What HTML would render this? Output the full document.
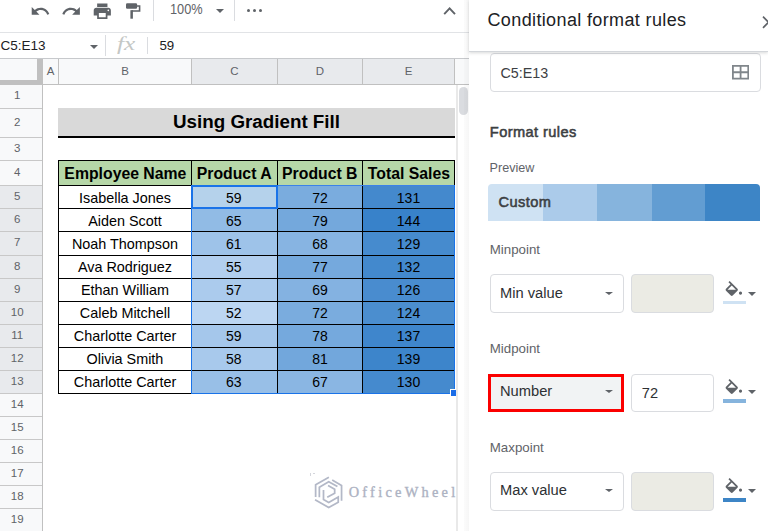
<!DOCTYPE html>
<html><head><meta charset="utf-8"><title>Conditional format rules</title>
<style>
html,body{margin:0;padding:0;}
body{width:768px;height:531px;overflow:hidden;background:#fff;position:relative;font-family:"Liberation Sans",sans-serif;color:#000;}
.a{position:absolute;}
.t{position:absolute;white-space:nowrap;line-height:1;}
.rh{position:absolute;left:0;width:42px;background:#f8f9fa;border-bottom:1px solid #c8c8c8;font-size:11.5px;color:#5f6368;text-align:center;box-sizing:content-box;}
.rh span{position:absolute;left:0;width:34.4px;text-align:center;line-height:1;}
.rh.sel{background:#e8eaed;}
.ch{position:absolute;top:59px;height:25px;background:#f8f9fa;border-right:1px solid #c0c0c0;font-size:11.5px;color:#5f6368;text-align:center;line-height:25px;}
.ch.sel{background:#e8eaed;}
.cell{position:absolute;font-size:14.2px;text-align:center;white-space:nowrap;overflow:hidden;color:#000;}
.hl{position:absolute;height:1px;background:#000;}
.vl{position:absolute;width:1px;background:#000;}
.lbl{position:absolute;left:489px;font-size:12px;color:#5f6368;line-height:1;white-space:nowrap;}
.sel{ }
.box{position:absolute;box-sizing:border-box;border:1px solid #dadce0;border-radius:4px;background:#fff;}
.box .tx{position:absolute;left:10px;font-size:14px;color:#202124;line-height:1;white-space:nowrap;}
.arr{position:absolute;width:0;height:0;border-left:4.5px solid transparent;border-right:4.5px solid transparent;border-top:4.5px solid #5f6368;}
</style></head><body>

<div class="a" style="left:0;top:0;width:469px;height:32px;background:#fff;border-bottom:1px solid #e1e3e6;"></div>
<svg class="a" style="left:30.1px;top:0.5px;" width="20.6" height="20.6" viewBox="0 0 24 24"><path fill="#5f6368" d="M12.5 8c-2.65 0-5.05.99-6.9 2.6L2 7v9h9l-3.62-3.62c1.39-1.16 3.16-1.88 5.12-1.88 3.54 0 6.55 2.31 7.6 5.5l2.37-.78C21.08 11.03 17.15 8 12.5 8z"/></svg>
<svg class="a" style="left:61.4px;top:0.5px;" width="20.6" height="20.6" viewBox="0 0 24 24"><path fill="#5f6368" d="M18.4 10.6C16.55 8.99 14.15 8 11.5 8c-4.65 0-8.58 3.03-9.96 7.22L3.9 16c1.05-3.19 4.05-5.5 7.6-5.5 1.95 0 3.73.72 5.12 1.88L13 16h9V7l-3.6 3.6z"/></svg>
<svg class="a" style="left:91.6px;top:0.5px;" width="20.6" height="20.6" viewBox="0 0 24 24"><path fill="#5f6368" d="M19 8H5c-1.66 0-3 1.34-3 3v6h4v4h12v-4h4v-6c0-1.66-1.34-3-3-3zm-3 11H8v-5h8v5zm3-7c-.55 0-1-.45-1-1s.45-1 1-1 1 .45 1 1-.45 1-1 1zm-1-9H6v4h12V3z"/></svg>
<svg class="a" style="left:120px;top:0;" width="30" height="24" viewBox="120 0 30 24"><rect x="126" y="3.2" width="11.1" height="5.5" rx="1.2" fill="#5f6368"/><path d="M137 6 H139.6 V11 H131.6" fill="none" stroke="#5f6368" stroke-width="1.6"/><rect x="130.4" y="10.2" width="2.5" height="8.5" fill="#5f6368"/></svg>
<div class="a" style="left:153px;top:0;width:1px;height:21px;background:#dadce0;"></div>
<div class="t" style="left:170.4px;top:2.18px;font-size:14.2px;color:#5f6368;transform:scaleX(0.9);transform-origin:0 0;">100%</div>
<div class="arr" style="left:216px;top:8.6px;"></div>
<div class="a" style="left:234px;top:0;width:1px;height:21px;background:#dadce0;"></div>
<div class="a" style="left:246.6px;top:9.3px;width:3px;height:3px;border-radius:50%;background:#5f6368;"></div>
<div class="a" style="left:252.6px;top:9.3px;width:3px;height:3px;border-radius:50%;background:#5f6368;"></div>
<div class="a" style="left:258.6px;top:9.3px;width:3px;height:3px;border-radius:50%;background:#5f6368;"></div>
<svg class="a" style="left:442px;top:5px;" width="16" height="12" viewBox="0 0 16 12"><path d="M2.2 9.2 L7.6 3.4 L13 9.2" fill="none" stroke="#5f6368" stroke-width="1.9"/></svg>
<div class="a" style="left:0;top:33px;width:469px;height:25px;background:#fff;border-bottom:1px solid #c7c9cc;"></div>
<div class="t" style="left:0.5px;top:38.87px;font-size:13.5px;color:#202124;">C5:E13</div>
<div class="arr" style="left:90px;top:45px;border-top-color:#5f6368;"></div>
<div class="a" style="left:105px;top:35px;width:1px;height:21px;background:#dadce0;"></div>
<div class="t" style="left:117px;top:35px;font-family:'Liberation Serif',serif;font-style:italic;font-size:18px;color:#c4c7c5;transform:scaleX(1.4);transform-origin:0 0;">fx</div>
<div class="a" style="left:147px;top:37px;width:1px;height:17px;background:#dadce0;"></div>
<div class="t" style="left:159.4px;top:39.04px;font-size:13.3px;color:#202124;">59</div>
<div class="a" style="left:0;top:59px;width:469px;height:25px;background:#f8f9fa;border-bottom:1px solid #c0c0c0;"></div>
<div class="ch" style="left:43px;width:15px;">A</div>
<div class="ch" style="left:59px;width:132px;">B</div>
<div class="ch sel" style="left:192px;width:85px;">C</div>
<div class="ch sel" style="left:278px;width:84px;">D</div>
<div class="ch sel" style="left:363px;width:91px;">E</div>
<div class="a" style="left:0;top:59px;width:37px;height:21px;background:#f8f9fa;"></div>
<div class="a" style="left:37px;top:59px;width:6px;height:26px;background:#c0c0c0;"></div>
<div class="a" style="left:0;top:80px;width:43px;height:5px;background:#c0c0c0;"></div>
<div class="rh" style="top:85px;height:23px;"><span style="top:5.25px;">1</span></div>
<div class="rh" style="top:109px;height:28px;"><span style="top:7.75px;">2</span></div>
<div class="rh" style="top:138px;height:22px;"><span style="top:4.75px;">3</span></div>
<div class="rh" style="top:161px;height:24px;"><span style="top:5.75px;">4</span></div>
<div class="rh sel" style="top:186px;height:22px;"><span style="top:4.75px;">5</span></div>
<div class="rh sel" style="top:209px;height:22px;"><span style="top:4.75px;">6</span></div>
<div class="rh sel" style="top:232px;height:23px;"><span style="top:5.25px;">7</span></div>
<div class="rh sel" style="top:256px;height:22px;"><span style="top:4.75px;">8</span></div>
<div class="rh sel" style="top:279px;height:22px;"><span style="top:4.75px;">9</span></div>
<div class="rh sel" style="top:302px;height:22px;"><span style="top:4.75px;">10</span></div>
<div class="rh sel" style="top:325px;height:22px;"><span style="top:4.75px;">11</span></div>
<div class="rh sel" style="top:348px;height:22px;"><span style="top:4.75px;">12</span></div>
<div class="rh sel" style="top:371px;height:22px;"><span style="top:4.75px;">13</span></div>
<div class="rh" style="top:394px;height:22px;"><span style="top:4.75px;">14</span></div>
<div class="rh" style="top:417px;height:22px;"><span style="top:4.75px;">15</span></div>
<div class="rh" style="top:440px;height:22px;"><span style="top:4.75px;">16</span></div>
<div class="rh" style="top:463px;height:22px;"><span style="top:4.75px;">17</span></div>
<div class="rh" style="top:486px;height:22px;"><span style="top:4.75px;">18</span></div>
<div class="rh" style="top:509px;height:22px;"><span style="top:4.75px;">19</span></div>
<div class="a" style="left:42px;top:85px;width:1px;height:446px;background:#c0c0c0;"></div>
<div class="a" style="left:58px;top:108px;width:397px;height:28px;background:#d9d9d9;"></div>
<div class="a" style="left:58px;top:136px;width:397px;height:2px;background:#000;"></div>
<div class="t" style="left:58px;top:113.39px;font-size:18.8px;width:397px;text-align:center;font-weight:bold;">Using Gradient Fill</div>
<div class="a" style="left:59px;top:161px;width:396px;height:24px;background:#b6d7a8;"></div>
<div class="t" style="left:49.4px;top:165.73px;font-size:15.8px;width:152px;text-align:center;font-weight:bold;">Employee Name</div>
<div class="t" style="left:181.7px;top:165.73px;font-size:15.8px;width:105px;text-align:center;font-weight:bold;">Product A</div>
<div class="t" style="left:267.8px;top:165.73px;font-size:15.8px;width:104px;text-align:center;font-weight:bold;">Product B</div>
<div class="t" style="left:353.4px;top:165.73px;font-size:15.8px;width:111px;text-align:center;font-weight:bold;">Total Sales</div>
<div class="a" style="left:59px;top:186px;width:132px;height:22px;background:#fff;"></div>
<div class="t" style="left:59px;top:190.66px;font-size:14.4px;width:132px;text-align:center;transform:scaleY(1.04);transform-origin:50% 84.65%;">Isabella Jones</div>
<div class="a" style="left:192px;top:186px;width:85px;height:22px;background:#b5d2eb;"></div>
<div class="t" style="left:191.3px;top:191.00px;font-size:14.0px;width:85px;text-align:center;transform:scaleY(1.09);transform-origin:50% 84.65%;">59</div>
<div class="a" style="left:278px;top:186px;width:84px;height:22px;background:#7aacde;"></div>
<div class="t" style="left:278px;top:191.00px;font-size:14.0px;width:84px;text-align:center;transform:scaleY(1.09);transform-origin:50% 84.65%;">72</div>
<div class="a" style="left:363px;top:186px;width:91px;height:22px;background:#4489cd;"></div>
<div class="t" style="left:363px;top:191.00px;font-size:14.0px;width:91px;text-align:center;transform:scaleY(1.09);transform-origin:50% 84.65%;">131</div>
<div class="a" style="left:59px;top:209px;width:132px;height:22px;background:#fff;"></div>
<div class="t" style="left:59px;top:213.67px;font-size:14.4px;width:132px;text-align:center;transform:scaleY(1.04);transform-origin:50% 84.65%;">Aiden Scott</div>
<div class="a" style="left:192px;top:209px;width:85px;height:22px;background:#91bbe5;"></div>
<div class="t" style="left:191.3px;top:214.01px;font-size:14.0px;width:85px;text-align:center;transform:scaleY(1.09);transform-origin:50% 84.65%;">65</div>
<div class="a" style="left:278px;top:209px;width:84px;height:22px;background:#74a8dc;"></div>
<div class="t" style="left:278px;top:214.01px;font-size:14.0px;width:84px;text-align:center;transform:scaleY(1.09);transform-origin:50% 84.65%;">79</div>
<div class="a" style="left:363px;top:209px;width:91px;height:22px;background:#3882ca;"></div>
<div class="t" style="left:363px;top:214.01px;font-size:14.0px;width:91px;text-align:center;transform:scaleY(1.09);transform-origin:50% 84.65%;">144</div>
<div class="a" style="left:59px;top:232px;width:132px;height:23px;background:#fff;"></div>
<div class="t" style="left:59px;top:236.68px;font-size:14.4px;width:132px;text-align:center;transform:scaleY(1.04);transform-origin:50% 84.65%;">Noah Thompson</div>
<div class="a" style="left:192px;top:232px;width:85px;height:23px;background:#9ec3e9;"></div>
<div class="t" style="left:191.3px;top:237.02px;font-size:14.0px;width:85px;text-align:center;transform:scaleY(1.09);transform-origin:50% 84.65%;">61</div>
<div class="a" style="left:278px;top:232px;width:84px;height:23px;background:#87b4e2;"></div>
<div class="t" style="left:278px;top:237.02px;font-size:14.0px;width:84px;text-align:center;transform:scaleY(1.09);transform-origin:50% 84.65%;">68</div>
<div class="a" style="left:363px;top:232px;width:91px;height:23px;background:#468bce;"></div>
<div class="t" style="left:363px;top:237.02px;font-size:14.0px;width:91px;text-align:center;transform:scaleY(1.09);transform-origin:50% 84.65%;">129</div>
<div class="a" style="left:59px;top:256px;width:132px;height:22px;background:#fff;"></div>
<div class="t" style="left:59px;top:259.69px;font-size:14.4px;width:132px;text-align:center;transform:scaleY(1.04);transform-origin:50% 84.65%;">Ava Rodriguez</div>
<div class="a" style="left:192px;top:256px;width:85px;height:22px;background:#b2cfef;"></div>
<div class="t" style="left:191.3px;top:260.03px;font-size:14.0px;width:85px;text-align:center;transform:scaleY(1.09);transform-origin:50% 84.65%;">55</div>
<div class="a" style="left:278px;top:256px;width:84px;height:22px;background:#75a9dd;"></div>
<div class="t" style="left:278px;top:260.03px;font-size:14.0px;width:84px;text-align:center;transform:scaleY(1.09);transform-origin:50% 84.65%;">77</div>
<div class="a" style="left:363px;top:256px;width:91px;height:22px;background:#4389cd;"></div>
<div class="t" style="left:363px;top:260.03px;font-size:14.0px;width:91px;text-align:center;transform:scaleY(1.09);transform-origin:50% 84.65%;">132</div>
<div class="a" style="left:59px;top:279px;width:132px;height:22px;background:#fff;"></div>
<div class="t" style="left:59px;top:282.70px;font-size:14.4px;width:132px;text-align:center;transform:scaleY(1.04);transform-origin:50% 84.65%;">Ethan William</div>
<div class="a" style="left:192px;top:279px;width:85px;height:22px;background:#abcbed;"></div>
<div class="t" style="left:191.3px;top:283.04px;font-size:14.0px;width:85px;text-align:center;transform:scaleY(1.09);transform-origin:50% 84.65%;">57</div>
<div class="a" style="left:278px;top:279px;width:84px;height:22px;background:#84b2e1;"></div>
<div class="t" style="left:278px;top:283.04px;font-size:14.0px;width:84px;text-align:center;transform:scaleY(1.09);transform-origin:50% 84.65%;">69</div>
<div class="a" style="left:363px;top:279px;width:91px;height:22px;background:#498ccf;"></div>
<div class="t" style="left:363px;top:283.04px;font-size:14.0px;width:91px;text-align:center;transform:scaleY(1.09);transform-origin:50% 84.65%;">126</div>
<div class="a" style="left:59px;top:302px;width:132px;height:22px;background:#fff;"></div>
<div class="t" style="left:59px;top:305.71px;font-size:14.4px;width:132px;text-align:center;transform:scaleY(1.04);transform-origin:50% 84.65%;">Caleb Mitchell</div>
<div class="a" style="left:192px;top:302px;width:85px;height:22px;background:#bcd6f2;"></div>
<div class="t" style="left:191.3px;top:306.05px;font-size:14.0px;width:85px;text-align:center;transform:scaleY(1.09);transform-origin:50% 84.65%;">52</div>
<div class="a" style="left:278px;top:302px;width:84px;height:22px;background:#7aacde;"></div>
<div class="t" style="left:278px;top:306.05px;font-size:14.0px;width:84px;text-align:center;transform:scaleY(1.09);transform-origin:50% 84.65%;">72</div>
<div class="a" style="left:363px;top:302px;width:91px;height:22px;background:#4b8ecf;"></div>
<div class="t" style="left:363px;top:306.05px;font-size:14.0px;width:91px;text-align:center;transform:scaleY(1.09);transform-origin:50% 84.65%;">124</div>
<div class="a" style="left:59px;top:325px;width:132px;height:22px;background:#fff;"></div>
<div class="t" style="left:59px;top:328.72px;font-size:14.4px;width:132px;text-align:center;transform:scaleY(1.04);transform-origin:50% 84.65%;">Charlotte Carter</div>
<div class="a" style="left:192px;top:325px;width:85px;height:22px;background:#a5c7eb;"></div>
<div class="t" style="left:191.3px;top:329.06px;font-size:14.0px;width:85px;text-align:center;transform:scaleY(1.09);transform-origin:50% 84.65%;">59</div>
<div class="a" style="left:278px;top:325px;width:84px;height:22px;background:#75a9dd;"></div>
<div class="t" style="left:278px;top:329.06px;font-size:14.0px;width:84px;text-align:center;transform:scaleY(1.09);transform-origin:50% 84.65%;">78</div>
<div class="a" style="left:363px;top:325px;width:91px;height:22px;background:#3f86cc;"></div>
<div class="t" style="left:363px;top:329.06px;font-size:14.0px;width:91px;text-align:center;transform:scaleY(1.09);transform-origin:50% 84.65%;">137</div>
<div class="a" style="left:59px;top:348px;width:132px;height:22px;background:#fff;"></div>
<div class="t" style="left:59px;top:351.73px;font-size:14.4px;width:132px;text-align:center;transform:scaleY(1.04);transform-origin:50% 84.65%;">Olivia Smith</div>
<div class="a" style="left:192px;top:348px;width:85px;height:22px;background:#a8c9ec;"></div>
<div class="t" style="left:191.3px;top:352.07px;font-size:14.0px;width:85px;text-align:center;transform:scaleY(1.09);transform-origin:50% 84.65%;">58</div>
<div class="a" style="left:278px;top:348px;width:84px;height:22px;background:#72a7dc;"></div>
<div class="t" style="left:278px;top:352.07px;font-size:14.0px;width:84px;text-align:center;transform:scaleY(1.09);transform-origin:50% 84.65%;">81</div>
<div class="a" style="left:363px;top:348px;width:91px;height:22px;background:#3d85cb;"></div>
<div class="t" style="left:363px;top:352.07px;font-size:14.0px;width:91px;text-align:center;transform:scaleY(1.09);transform-origin:50% 84.65%;">139</div>
<div class="a" style="left:59px;top:371px;width:132px;height:22px;background:#fff;"></div>
<div class="t" style="left:59px;top:374.74px;font-size:14.4px;width:132px;text-align:center;transform:scaleY(1.04);transform-origin:50% 84.65%;">Charlotte Carter</div>
<div class="a" style="left:192px;top:371px;width:85px;height:22px;background:#98bfe7;"></div>
<div class="t" style="left:191.3px;top:375.08px;font-size:14.0px;width:85px;text-align:center;transform:scaleY(1.09);transform-origin:50% 84.65%;">63</div>
<div class="a" style="left:278px;top:371px;width:84px;height:22px;background:#8ab6e3;"></div>
<div class="t" style="left:278px;top:375.08px;font-size:14.0px;width:84px;text-align:center;transform:scaleY(1.09);transform-origin:50% 84.65%;">67</div>
<div class="a" style="left:363px;top:371px;width:91px;height:22px;background:#458ace;"></div>
<div class="t" style="left:363px;top:375.08px;font-size:14.0px;width:91px;text-align:center;transform:scaleY(1.09);transform-origin:50% 84.65%;">130</div>
<div class="hl" style="left:58px;top:160px;width:397px;"></div>
<div class="hl" style="left:58px;top:185px;width:397px;"></div>
<div class="hl" style="left:58px;top:208px;width:397px;"></div>
<div class="hl" style="left:58px;top:231px;width:397px;"></div>
<div class="hl" style="left:58px;top:255px;width:397px;"></div>
<div class="hl" style="left:58px;top:278px;width:397px;"></div>
<div class="hl" style="left:58px;top:301px;width:397px;"></div>
<div class="hl" style="left:58px;top:324px;width:397px;"></div>
<div class="hl" style="left:58px;top:347px;width:397px;"></div>
<div class="hl" style="left:58px;top:370px;width:397px;"></div>
<div class="hl" style="left:58px;top:393px;width:397px;"></div>
<div class="vl" style="left:58px;top:160px;height:234px;"></div>
<div class="vl" style="left:191px;top:160px;height:234px;"></div>
<div class="vl" style="left:277px;top:160px;height:234px;"></div>
<div class="vl" style="left:362px;top:160px;height:234px;"></div>
<div class="vl" style="left:454px;top:160px;height:234px;"></div>
<div class="a" style="left:191px;top:185px;width:262px;height:207px;border:1px solid #1a73e8;border-top-color:#3b82e8;"></div>
<div class="a" style="left:191px;top:185px;width:83px;height:20px;border:2px solid #1a73e8;"></div>
<div class="a" style="left:450px;top:388.5px;width:5.6px;height:6.3px;background:#1a6ce8;border:1px solid #fff;border-right:0;border-bottom:0;"></div>
<div class="a" style="left:456px;top:85px;width:2px;height:446px;background:#e9e9e9;"></div>
<div class="a" style="left:459px;top:87px;width:9px;height:28px;border-radius:5px;background:#dadce0;"></div>
<div class="a" style="left:310px;top:473px;width:1px;height:3px;background:#d4d6dc;"></div><div class="a" style="left:313px;top:473px;width:2px;height:1px;background:#d4d6dc;"></div>
<svg class="a" style="left:308px;top:470px;" width="44" height="44" viewBox="0 0 531 531"><g fill="none" stroke="#b3b8c7" stroke-width="21" stroke-linejoin="miter"><path d="M252 88 L92 178 L92 325"/><path d="M137 330 L137 208 L250 142 L355 200"/><path d="M292 122 L405 186 L405 372"/><path d="M85 358 L250 452 L365 388 L365 325 L250 392 L187 356 L187 240"/><path d="M232 330 L322 280 L322 232 L242 188"/></g></svg>
<div class="t" style="left:348.7px;top:485.31px;font-size:14.4px;font-family:'Liberation Serif',serif;letter-spacing:3.25px;color:#adb2c2;-webkit-text-stroke:0.35px #adb2c2;">OfficeWheel</div>
<div class="a" style="left:464px;top:0;width:5.5px;height:531px;background:linear-gradient(to right,rgba(0,0,0,0.015),rgba(0,0,0,0.04));"></div>
<div class="a" style="left:469px;top:0;width:299px;height:531px;background:#fff;"></div>
<div class="box" style="left:489.5px;top:53px;width:271px;height:38.7px;"></div>
<div class="t" style="left:500.5px;top:65.90px;font-size:14.3px;color:#3c4043;">C5:E13</div>
<svg class="a" style="left:732px;top:65px;" width="17.2" height="14.5" viewBox="0 0 17.2 14.5"><path d="M0.9 0.9h15.4v12.7H0.9zM8.6 0.9v12.7M0.9 7.25h15.4" fill="none" stroke="#80868b" stroke-width="1.8"/></svg>
<div class="a" style="left:469px;top:0;width:299px;height:51px;background:#fff;border-bottom:1px solid #d3d6da;box-shadow:0 1px 3px rgba(60,64,67,0.2);"></div>
<div class="t" style="left:487.5px;top:11.36px;font-size:18px;color:#202124;letter-spacing:0.37px;">Conditional format rules</div>
<svg class="a" style="left:760px;top:14px;" width="17" height="17" viewBox="0 0 17 17"><path d="M3 2.6 L14 13.9 M14 2.6 L3 13.9" fill="none" stroke="#5f6368" stroke-width="1.7"/></svg>
<div class="t" style="left:489.8px;top:124.54px;font-size:14.6px;color:#3c4043;-webkit-text-stroke:0.55px #3c4043;letter-spacing:0.42px;">Format rules</div>
<div class="t" style="left:489.6px;top:162.43px;font-size:12.6px;color:#5f6368;">Preview</div>
<div class="a" style="left:488px;top:184px;width:272px;height:37px;border-radius:4px 4px 0 0;overflow:hidden;">
<div class="a" style="left:0px;top:0;width:55px;height:37px;background:#cfe2f3;"></div>
<div class="a" style="left:55px;top:0;width:54px;height:37px;background:#abcbea;"></div>
<div class="a" style="left:109px;top:0;width:55px;height:37px;background:#86b4dd;"></div>
<div class="a" style="left:164px;top:0;width:53px;height:37px;background:#629dd2;"></div>
<div class="a" style="left:217px;top:0;width:55px;height:37px;background:#3d85c6;"></div>
</div>
<div class="t" style="left:498.6px;top:195.24px;font-size:14.6px;color:#3c4043;-webkit-text-stroke:0.55px #3c4043;letter-spacing:0.4px;">Custom</div>
<div class="t" style="left:489.8px;top:243.24px;font-size:13.3px;color:#5f6368;">Minpoint</div>
<div class="box" style="left:489.5px;top:274.4px;width:134.2px;height:38.9px;"></div>
<div class="t" style="left:500px;top:285.86px;font-size:14.7px;color:#2d3033;">Min value</div>
<div class="arr" style="left:605px;top:291.90000000000003px;border-left-width:4.5px;border-right-width:4.5px;border-top-width:3.8px;"></div>
<div class="box" style="left:631.1px;top:274.4px;width:82.5px;height:38.9px;background:#ebebe4;"></div>
<svg class="a" style="left:723.2px;top:280.7px;" width="21" height="21" viewBox="0 0 24 24"><path fill="#5f6368" d="M16.56 8.94L7.62 0 6.21 1.41l2.38 2.38-5.15 5.15c-.59.59-.59 1.54 0 2.12l5.5 5.5c.29.29.68.44 1.06.44s.77-.15 1.06-.44l5.5-5.5c.59-.58.59-1.53 0-2.12zM5.21 10L10 5.21 14.79 10H5.21zM20 12.1a1.75 1.75 0 1 0 0.001 0z"/></svg>
<div class="a" style="left:723px;top:300.90000000000003px;width:23px;height:3.6px;background:#cfe2f3;"></div>
<div class="arr" style="left:748.1px;top:291.5px;border-left-width:4.3px;border-right-width:4.3px;border-top-width:4.2px;"></div>
<div class="t" style="left:489.8px;top:342.34px;font-size:13.3px;color:#5f6368;">Midpoint</div>
<div class="a" style="left:488.3px;top:373.8px;width:136px;height:38.7px;box-sizing:border-box;border:3px solid #fb0000;background:#f1f3f4;"></div>
<div class="t" style="left:500px;top:384.26px;font-size:14.7px;color:#2d3033;">Number</div>
<div class="arr" style="left:605px;top:390.3px;border-left-width:4.5px;border-right-width:4.5px;border-top-width:3.8px;"></div>
<div class="box" style="left:631.1px;top:374.0px;width:82.5px;height:38.300000000000004px;background:#fff;"></div>
<div class="t" style="left:641.8px;top:385.94px;font-size:14.6px;color:#2d3033;">72</div>
<svg class="a" style="left:723.2px;top:379.09999999999997px;" width="21" height="21" viewBox="0 0 24 24"><path fill="#5f6368" d="M16.56 8.94L7.62 0 6.21 1.41l2.38 2.38-5.15 5.15c-.59.59-.59 1.54 0 2.12l5.5 5.5c.29.29.68.44 1.06.44s.77-.15 1.06-.44l5.5-5.5c.59-.58.59-1.53 0-2.12zM5.21 10L10 5.21 14.79 10H5.21zM20 12.1a1.75 1.75 0 1 0 0.001 0z"/></svg>
<div class="a" style="left:723px;top:399.3px;width:23px;height:3.6px;background:#86b4dd;"></div>
<div class="arr" style="left:748.1px;top:389.9px;border-left-width:4.3px;border-right-width:4.3px;border-top-width:4.2px;"></div>
<div class="t" style="left:489.8px;top:440.94px;font-size:13.3px;color:#5f6368;">Maxpoint</div>
<div class="box" style="left:489.5px;top:472.2px;width:134.2px;height:38.4px;"></div>
<div class="t" style="left:500px;top:483.16px;font-size:14.7px;color:#2d3033;">Max value</div>
<div class="arr" style="left:605px;top:489.20000000000005px;border-left-width:4.5px;border-right-width:4.5px;border-top-width:3.8px;"></div>
<div class="box" style="left:631.1px;top:472.2px;width:82.5px;height:38.4px;background:#ebebe4;"></div>
<svg class="a" style="left:723.2px;top:478.0px;" width="21" height="21" viewBox="0 0 24 24"><path fill="#5f6368" d="M16.56 8.94L7.62 0 6.21 1.41l2.38 2.38-5.15 5.15c-.59.59-.59 1.54 0 2.12l5.5 5.5c.29.29.68.44 1.06.44s.77-.15 1.06-.44l5.5-5.5c.59-.58.59-1.53 0-2.12zM5.21 10L10 5.21 14.79 10H5.21zM20 12.1a1.75 1.75 0 1 0 0.001 0z"/></svg>
<div class="a" style="left:723px;top:498.20000000000005px;width:23px;height:3.6px;background:#3d85c6;"></div>
<div class="arr" style="left:748.1px;top:488.8px;border-left-width:4.3px;border-right-width:4.3px;border-top-width:4.2px;"></div>
</body></html>
